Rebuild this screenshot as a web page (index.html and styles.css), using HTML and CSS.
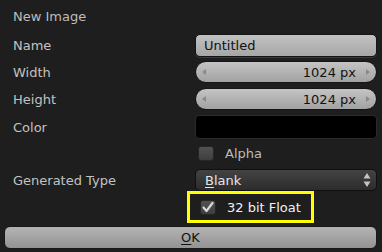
FILE: index.html
```html
<!DOCTYPE html>
<html>
<head>
<meta charset="utf-8">
<link rel="stylesheet" href="styles.css">
</head>
<body>
<div class="dialog">
  <div class="title">New Image</div>
  <div class="row r-name">
    <div class="label">Name</div>
    <div class="field text">Untitled</div>
  </div>
  <div class="row r-width">
    <div class="label">Width</div>
    <div class="field num"><span class="arr left"></span><span class="val">1024 px</span><span class="arr right"></span></div>
  </div>
  <div class="row r-height">
    <div class="label">Height</div>
    <div class="field num"><span class="arr left"></span><span class="val">1024 px</span><span class="arr right"></span></div>
  </div>
  <div class="row r-color">
    <div class="label">Color</div>
    <div class="field swatch"></div>
  </div>
  <div class="row r-alpha">
    <div class="label"></div>
    <div class="check-wrap"><span class="box"></span><span class="ctext dim">Alpha</span></div>
  </div>
  <div class="row r-type">
    <div class="label">Generated Type</div>
    <div class="field menu"><span><u>B</u>lank</span>
      <svg class="updown" width="8" height="16" viewBox="0 0 8 16"><path d="M4 1 L7.5 6.5 L0.5 6.5 Z M4 15 L7.5 9.5 L0.5 9.5 Z" fill="#c4c4c4"/></svg>
    </div>
  </div>
  <div class="row r-float">
    <div class="hl">
      <span class="box checked"><svg width="14" height="13" viewBox="0 0 14 13"><path d="M2.5 6.5 L5.5 10 L11.5 2" fill="none" stroke="#d8d8d8" stroke-width="2.2" stroke-linecap="round" stroke-linejoin="round"/></svg></span>
      <span class="ctext bright">32 bit Float</span>
    </div>
  </div>
  <div class="ok"><span><u>O</u>K</span></div>
</div>
</body>
</html>
```

FILE: styles.css
```css
html, body {
  margin: 0;
  padding: 0;
  background: #1e1e1e;
}
body {
  width: 382px;
  height: 252px;
  overflow: hidden;
  font-family: "DejaVu Sans", "Liberation Sans", sans-serif;
  font-size: 13px;
  color: #c4c4c4;
}
.dialog {
  padding-top: 9px;
  display: flex;
  flex-direction: column;
}
.title {
  height: 15px;
  line-height: 15px;
  padding-left: 13px;
  color: #bdbdbd;
}
.row {
  display: flex;
  align-items: center;
}
.label {
  width: 195px;
  padding-left: 13px;
  box-sizing: border-box;
  color: #c2c2c2;
  flex: none;
}
.r-name { margin-top: 10px; height: 23px; }
.r-width { margin-top: 4px; height: 22px; }
.r-height { margin-top: 5px; height: 22px; }
.r-color { margin-top: 5px; height: 24px; }
.r-alpha { margin-top: 7px; height: 15px; }
.r-type { margin-top: 8px; height: 22px; }
.r-float { height: 32px; padding-left: 187px; }

.field {
  width: 182px;
  height: 100%;
  box-sizing: border-box;
  border: 1px solid #151515;
  display: flex;
  align-items: center;
}
.text {
  border-radius: 5px;
  background: linear-gradient(#c2c2c2, #a6a6a6);
  color: #111;
  padding-left: 8px;
  box-shadow: 0 1px 0 #3a3a3a;
}
.num {
  border-radius: 11px;
  background: linear-gradient(#c4c4c4, #a2a2a2);
  color: #111;
  padding: 0 6px;
  justify-content: space-between;
}
.num .val {
  margin-left: auto;
  margin-right: 10px;
}
.arr {
  width: 0;
  height: 0;
  border-top: 3.5px solid transparent;
  border-bottom: 3.5px solid transparent;
}
.arr.left { border-right: 4px solid #8a8a8a; }
.arr.right { border-left: 4px solid #8a8a8a; }
.swatch {
  background: #000;
  border-radius: 4px;
  border-color: #2a2a2a;
}
.check-wrap {
  display: flex;
  align-items: center;
  padding-left: 3px;
}
.box {
  width: 16px;
  height: 15px;
  box-sizing: border-box;
  border-radius: 3px;
  border: 1px solid #262626;
  background: linear-gradient(#525252, #3e3e3e);
  display: inline-flex;
  align-items: center;
  justify-content: center;
  flex: none;
}
.ctext { margin-left: 11px; }
.dim { color: #bcbcbc; }
.bright { color: #f2f2f2; }
.menu {
  border-radius: 5px;
  background: linear-gradient(#434343, #2c2c2c);
  border-color: #101010;
  color: #e6e6e6;
  padding-left: 9px;
  padding-right: 5px;
  justify-content: space-between;
}
.menu u { text-underline-offset: 2px; }
.hl {
  width: 127px;
  height: 32px;
  box-sizing: border-box;
  border: 3px solid #ffff00;
  display: flex;
  align-items: center;
  padding-left: 10px;
}
.ok {
  margin: 3px 0 0 4px;
  width: 373px;
  height: 23px;
  box-sizing: border-box;
  border: 1px solid #181818;
  border-radius: 6px;
  background: linear-gradient(#b4b4b4, #939393);
  color: #111;
  display: flex;
  align-items: center;
  justify-content: center;
}
.ok u { text-underline-offset: 2px; }
```
